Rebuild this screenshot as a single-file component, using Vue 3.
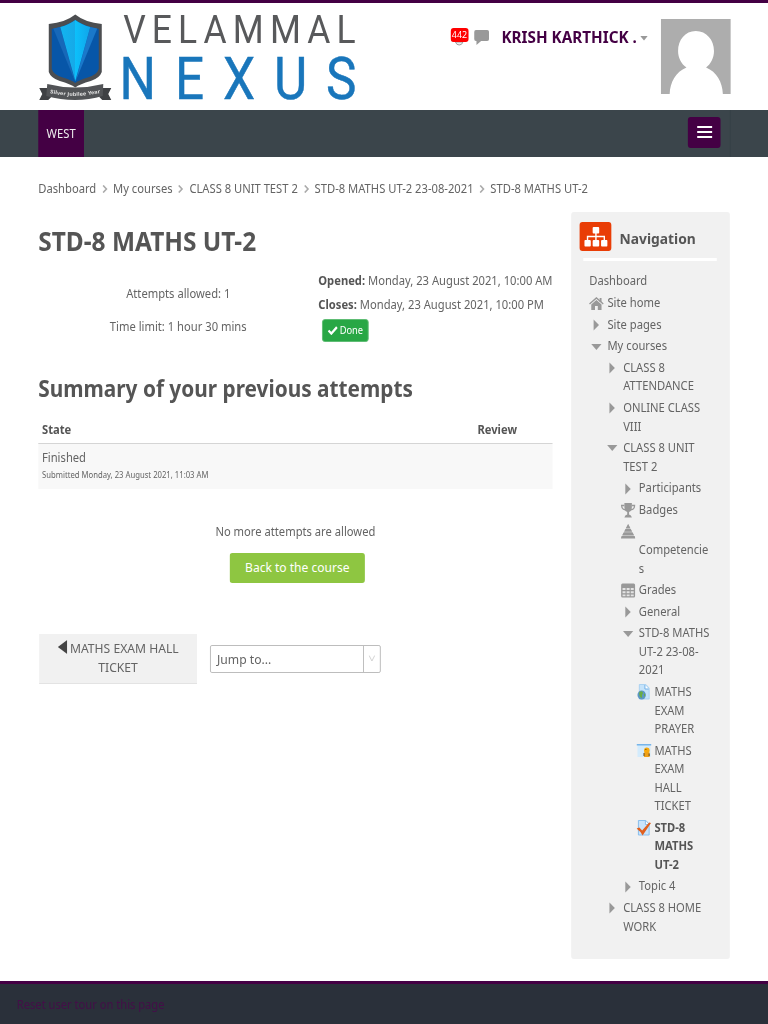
<script setup>
const crumbs = ['Dashboard', 'My courses', 'CLASS 8 UNIT TEST 2', 'STD-8 MATHS UT-2 23-08-2021', 'STD-8 MATHS UT-2']

const tree = [
  { level: 0, icon: '', lines: ['Dashboard'] },
  { level: 1, icon: 'home', lines: ['Site home'] },
  { level: 1, icon: 'right', lines: ['Site pages'] },
  { level: 1, icon: 'down', lines: ['My courses'] },
  { level: 2, icon: 'right', lines: ['CLASS 8', 'ATTENDANCE'] },
  { level: 2, icon: 'right', lines: ['ONLINE CLASS', 'VIII'] },
  { level: 2, icon: 'down', lines: ['CLASS 8 UNIT', 'TEST 2'] },
  { level: 3, icon: 'right', lines: ['Participants'] },
  { level: 3, icon: 'trophy', lines: ['Badges'] },
  { level: 3, icon: 'pyramid', lines: ['', 'Competencie', 's'] },
  { level: 3, icon: 'table', lines: ['Grades'] },
  { level: 3, icon: 'right', lines: ['General'] },
  { level: 3, icon: 'down', lines: ['STD-8 MATHS', 'UT-2 23-08-', '2021'] },
  { level: 4, icon: 'url', lines: ['MATHS', 'EXAM', 'PRAYER'] },
  { level: 4, icon: 'cert', lines: ['MATHS', 'EXAM', 'HALL', 'TICKET'] },
  { level: 4, icon: 'quiz', lines: ['STD-8', 'MATHS', 'UT-2'], bold: true },
  { level: 3, icon: 'right', lines: ['Topic 4'] },
  { level: 2, icon: 'right', lines: ['CLASS 8 HOME', 'WORK'] },
]
</script>

<template>
  <div class="viewport">
    <div class="page">
      <header class="head">
        <svg class="logo" width="346" height="94" viewBox="0 0 346 94">
          <defs>
            <linearGradient id="beam" x1="0" x2="1">
              <stop offset="0" stop-color="#12b4f0" />
              <stop offset=".5" stop-color="#16a9e8" />
              <stop offset=".5" stop-color="#0cc0fb" />
              <stop offset="1" stop-color="#11a5ea" />
            </linearGradient>
          </defs>
          <g transform="scale(1.0714 1)">
            <path d="M10.500 16 Q27 14.500 37 6.500 Q47 14.500 63.500 16 V64 Q61.500 70 52.500 73 Q41.500 76 37 79.500 Q32.500 76 21.500 73 Q12.500 70 10.500 64Z" fill="#4c4e51" />
            <path d="M13.500 21 Q27.500 18.500 37 12 Q46.500 18.500 60.500 21 V61 Q58.500 67 49.500 69.500 Q40.500 72 37 75 Q33.500 72 24.500 69.500 Q15.500 67 13.500 61Z" fill="#0756a8" />
            <path d="M15 20.500 L22 19 L37 74Z" fill="#1768b8" />
            <path d="M59 20.500 L52 19 L37 74Z" fill="#1a78ca" />
            <path d="M22 19 Q31 16.500 37 12 Q43 16.500 52 19 L37 73Z" fill="url(#beam)" />
            <path d="M1 80 L11 80 L13 89 L10 92 L1 92 L4 86Z M73 80 L64 80 L61 89 L64 92 L73 92 L70 86Z" fill="#3f4144" />
            <path d="M9 76 Q37 83 65 76 L64.500 88 Q37 96 8 88Z" fill="#525457" />
            <path id="ribbonLine" d="M11.500 85 Q37 91 63.500 84.500" fill="none" />
            <text class="jubilee"><textPath href="#ribbonLine" textLength="51">Silver Jubilee Year</textPath></text>
          </g>
          <text class="l1" x="91" y="34.700" textLength="249">VELAMMAL</text>
          <text class="l2" x="0" y="0" textLength="273" transform="translate(87 91.300) scale(.93 1)">NEXUS</text>
        </svg>
        <div class="user">
          <div class="bell">
            <svg width="20" height="16" viewBox="0 0 20 16"><path d="M2 10 Q5 9 5 5 H15 Q15 9 18 10 V11 H2Z M6 12 H14 Q13 15 10 15 Q7 15 6 12Z" fill="#eee" stroke="#999" /></svg>
            <span class="badge">442</span>
          </div>
          <svg class="chat" width="16" height="16" viewBox="0 0 16 16"><path d="M2 0 H14 Q16 0 16 2 V9 Q16 11 14 11 H7.500 L2.500 15 V11 H2 Q0 11 0 9 V2 Q0 0 2 0Z" fill="#999" /></svg>
          <span class="name">KRISH KARTHICK .</span>
          <svg class="caret" width="8" height="5" viewBox="0 0 8 5"><path d="M0 0 H8 L4 4.500Z" fill="#999" /></svg>
        </div>
        <svg class="avatar" width="75" height="75" viewBox="0 0 75 75">
          <rect width="75" height="75" fill="#adadad" />
          <path d="M37.500 12 C49 12 57 21 57 32 C57 39 53.500 45 48.500 48.500 C60 53 66 63 66.500 75 H9.500 C10 63 16 53 27.500 48.500 C22 45 18.500 39 18.500 32 C18.500 21 26 12 37.500 12Z" fill="#fff" />
        </svg>
      </header>

      <nav class="bar">
        <span class="west">WEST</span>
        <div class="burgerbox"><span class="burger"><i></i><i></i><i></i></span></div>
      </nav>

      <div class="crumbs">
        <template v-for="(c, i) in crumbs" :key="i">
          <svg v-if="i" width="7" height="8" viewBox="0 0 7 8"><path d="M1.500 .5 L5 4 L1.500 7.500" fill="none" stroke="#aaa" stroke-width="1.700" /></svg>
          <span>{{ c }}</span>
        </template>
      </div>

      <div class="cols">
        <main class="main">
          <h2>STD-8 MATHS UT-2</h2>
          <div class="info">
            <div class="limits"><p>Attempts allowed: 1</p><p>Time limit: 1 hour 30 mins</p></div>
            <div class="dates">
              <p><b>Opened:</b> Monday, 23 August 2021, 10:00 AM</p>
              <p><b>Closes:</b> Monday, 23 August 2021, 10:00 PM</p>
              <span class="done">
                <svg width="11" height="9" viewBox="0 0 11 9"><path d="M1 4.500 L4 7.500 L10 1.200" fill="none" stroke="#fff" stroke-width="2.400" /></svg>Done
              </span>
            </div>
          </div>
          <h3>Summary of your previous attempts</h3>
          <div class="thead"><span>State</span><span>Review</span></div>
          <div class="trow"><div>Finished</div><small>Submitted Monday, 23 August 2021, 11:03 AM</small></div>
          <p class="nomore">No more attempts are allowed</p>
          <span class="back">Back to the course</span>
          <div class="jump">
            <div class="prev"><div><svg width="10" height="14" viewBox="0 0 10 14"><path d="M10 0 V14 L0 7Z" fill="#444" /></svg> MATHS EXAM HALL</div><div>TICKET</div></div>
            <div class="select"><span>Jump to...</span><i><svg width="7" height="7" viewBox="0 0 7 7"><path d="M.5 .5 L3.500 6 L6.500 .5" fill="none" stroke="#ccc" stroke-width=".9" /></svg></i></div>
          </div>
        </main>

        <aside class="side">
          <div class="title">
            <span class="sq">
              <svg width="25" height="20" viewBox="0 0 25 20"><g fill="#fff"><rect x="9" y="0" width="7" height="6.500" rx="1" /><rect x="0" y="13" width="7" height="6.500" rx="1" /><rect x="9" y="13" width="7" height="6.500" rx="1" /><rect x="18" y="13" width="7" height="6.500" rx="1" /></g><path d="M12.500 6 V13 M3.500 13 V9.500 H21.500 V13" fill="none" stroke="#fff" stroke-width="1.500" /></svg>
            </span>
            <b>Navigation</b>
          </div>
          <ul>
            <li v-for="(t, i) in tree" :key="i" :class="['lv' + t.level, { bold: t.bold }]">
              <span class="ic">
                <svg v-if="t.icon === 'right'" width="16" height="12" viewBox="0 0 16 12"><path d="M5 .5 L10.800 6 L5 11.500Z" fill="#999" /></svg>
                <svg v-else-if="t.icon === 'down'" width="16" height="12" viewBox="0 0 16 12"><path d="M2.500 3 H13.500 L8 9Z" fill="#999" /></svg>
                <svg v-else-if="t.icon === 'home'" width="16" height="13" viewBox="0 0 16 13"><path d="M.6 7 L8 1 L15.400 7" fill="none" stroke="#999" stroke-width="1.600" /><path d="M11.500 1 H13.500 V5 H11.500Z M2.500 7.500 L8 3 L13.500 7.500 V13 H9.500 V9 H6.500 V13 H2.500Z" fill="#999" /></svg>
                <svg v-else-if="t.icon === 'trophy'" width="16" height="15" viewBox="0 0 16 15"><path d="M4 0 H12 V4 Q12 8 9 9 V11.500 Q11.500 12 12 14.500 H4 Q4.500 12 7 11.500 V9 Q4 8 4 4Z" fill="#999" /><path d="M4 2.500 H1 Q1 6.500 5.500 7 M12 2.500 H15 Q15 6.500 10.500 7" fill="none" stroke="#999" stroke-width="1.400" /></svg>
                <svg v-else-if="t.icon === 'pyramid'" width="16" height="15" viewBox="0 0 16 15"><path d="M8 0 L10.300 4 H5.700Z M5.200 5 H10.800 L12.200 7.500 H3.800Z M3.200 8.500 H12.800 L14.200 11 H1.800Z M1 12 H15 L15.700 14.500 H.3Z" fill="#999" /><path d="M8 0 L15.500 14 H.5Z" fill="#999" opacity=".55" /></svg>
                <svg v-else-if="t.icon === 'table'" width="16" height="15" viewBox="0 0 16 15"><rect x=".5" y=".5" width="15" height="14" rx="1.500" fill="#999" /><path d="M2 5 H5.200 V7 H2Z M6.400 5 H9.600 V7 H6.400Z M10.800 5 H14 V7 H10.800Z M2 8.200 H5.200 V10.200 H2Z M6.400 8.200 H9.600 V10.200 H6.400Z M10.800 8.200 H14 V10.200 H10.800Z M2 11.400 H5.200 V13.200 H2Z M6.400 11.400 H9.600 V13.200 H6.400Z M10.800 11.400 H14 V13.200 H10.800Z" fill="#e4e4e4" /></svg>
                <svg v-else-if="t.icon === 'url'" width="16" height="16" viewBox="0 0 16 16"><path d="M3 .5 H10 L13.500 4 V15 H3Z" fill="#c5e3fa" stroke="#a9d0f1" /><path d="M9 1 V5 H13" fill="#fff" stroke="#6faee6" /><circle cx="5.500" cy="11" r="4.500" fill="#5b97c6" /><path d="M3 8 Q6 6 7 9 Q5 11 6 14 Q2 13 3 8Z M8 9 L9.500 11 L8 13Z" fill="#6aad45" /></svg>
                <svg v-else-if="t.icon === 'cert'" width="16" height="14" viewBox="0 0 16 14"><rect x="1" y="1" width="14" height="12" fill="#d3ebfc" /><path d="M0 .8 H16" stroke="#77b5ea" stroke-width="1.500" /><circle cx="11" cy="6.500" r="3" fill="#f8a90d" /><path d="M8 8.500 H14 V13 H8Z" fill="#efa017" /><path d="M8 9 V12 M13.500 9.500 V12 M10 5 V6" stroke="#5d4420" /></svg>
                <svg v-else-if="t.icon === 'quiz'" width="16" height="16" viewBox="0 0 16 16"><path d="M2 .5 H10 L13.500 4 V15 H2Z" fill="#c9e4fb" stroke="#86bdec" /><path d="M9.500 1 V4.500 H13" fill="#fff" stroke="#86bdec" /><path d="M0 8.500 L3 7.500 L6 10.500 L13.500 2.500 L15.500 3 L6.500 15.500 Q4 11 0 8.500Z" fill="#e0601f" /></svg>
              </span>
              <span class="txt"><span v-for="(l, j) in t.lines" :key="j" class="ln">{{ l }}</span></span>
            </li>
          </ul>
        </aside>
      </div>

      <footer class="foot"><span>Reset user tour on this page</span></footer>
    </div>
  </div>
</template>

<style>
body { margin: 0; background: #fff; }
</style>

<style scoped>
* { box-sizing: border-box; }
.viewport { width: 768px; height: 1024px; overflow: hidden; }
/* The page is laid out wide and condensed horizontally. */
.page {
  width: 822.86px; height: 1024px; transform: scaleX(.93333); transform-origin: 0 0;
  display: flex; flex-direction: column;
  font: 12px/18.500px "Noto Sans", "Open Sans", sans-serif; color: #646464;
}
p, h2, h3, ul { margin: 0; padding: 0; }
svg { display: block; flex: none; }
.head { height: 110px; border-top: 3px solid #440044; padding: 0 40px 0 41px; display: flex; flex: none; }
.logo { margin-top: 5px; overflow: visible; }
.l1 { font: 38px Roboto, sans-serif; fill: #58595b; }
.l2 { font: 59px Roboto, sans-serif; fill: #1976bb; stroke: #1976bb; stroke-width: .5px; }
.jubilee { font: bold 5px "DejaVu Sans", sans-serif; fill: #ddd; }
.user { margin-left: auto; margin-right: 13.500px; display: flex; align-items: center; height: 28px; margin-top: 20px; }
.bell { position: relative; width: 20px; height: 16px; margin-right: 6.500px; top: 1px; }
.badge { position: absolute; left: 1px; top: -2px; width: 19px; height: 14px; border-radius: 3px; background: #f00; color: #fff; font-size: 9.500px; line-height: 14px; text-align: center; }
.chat { margin-top: 2px; }
.name { font-size: 16.350px; line-height: 20px; font-weight: 700; color: #440044; margin: 0 4px 0 13px; white-space: nowrap; }
.caret { margin-top: 3px; }
.avatar { margin-top: 16px; }
.bar { height: 47px; flex: none; background: #3b454b; padding: 0 40px 0 41px; display: flex; justify-content: space-between; }
.west { width: 49px; background: #440044; color: #eee; text-align: center; line-height: 47px; }
.burgerbox { border-right: 1px solid #364046; padding: 6.500px 9.500px 0 0; }
.burger { display: flex; flex-direction: column; justify-content: center; align-items: center; gap: 3px; width: 35px; height: 31px; border-radius: 3px; background: #440044; }
.burger i { width: 16px; height: 2px; background: #fff; }
.crumbs { margin: 22px 0 0 41px; height: 20px; display: flex; align-items: center; flex: none; white-space: nowrap; }
.crumbs svg { margin: 0 5.500px; }
.cols { margin: 13px 40.500px 0 41px; height: 747px; display: flex; justify-content: space-between; flex: none; }
.main { width: 551px; }
h2 { font-size: 26.200px; line-height: 36px; margin-top: 11px; color: #555; }
.info { display: flex; margin-top: 10px; height: 78px; white-space: nowrap; }
.limits { width: 301.500px; text-align: center; padding-top: 16px; }
.limits p + p { margin-top: 14px; }
.dates { padding-top: 3px; }
.dates p + p { margin-top: 5.500px; }
.dates b { color: #555; }
.done { display: flex; align-items: center; justify-content: center; gap: 2px; width: 50px; height: 23px; margin: 4.500px 0 0 4px; background: #28a745; border: 1px solid #5fbd74; border-radius: 3px; color: #fff; font-size: 10px; }
h3 { font-size: 22.300px; line-height: 32px; margin-top: 26px; color: #555; white-space: nowrap; }
.thead { display: flex; margin-top: 14px; height: 25px; border-bottom: 1px solid #d5d5d5; padding: 2px 4px 0; font-weight: 700; color: #555; }
.thead span:first-child { width: 466.500px; }
.trow { height: 45px; background: #f8f8f8; padding: 4.500px 4px 4px; }
.trow small { display: block; font-size: 8.250px; line-height: 15.500px; }
.nomore { text-align: center; margin-top: 33.500px; }
.back { display: block; width: 145px; height: 30px; margin: 12px auto 0; position: relative; left: 2px; background: #8ec641; color: #fff; border-radius: 3px; text-align: center; line-height: 29px; font-size: 12.900px; }
.jump { display: flex; margin: 50.500px 0 0 1px; gap: 14px; font-size: 13px; }
.prev { width: 169px; height: 50px; background: #f1f1f1; border-bottom: 1px solid #e3e3e3; text-align: center; padding-top: 5.500px; }
.prev svg { display: inline-block; vertical-align: -1px; }
.select { width: 183px; height: 28px; margin-top: 11px; border: 1px solid #bbb; border-radius: 2px; display: flex; justify-content: space-between; line-height: 26px; padding-left: 6.500px; }
.select i { width: 18px; border-left: 1px solid #bbb; display: flex; align-items: center; justify-content: center; }
.side { width: 170.500px; background: #f1f1f1; border-radius: 3px; padding: 9px 10px 9px 9.500px; }
.title { display: flex; align-items: center; height: 31px; font-size: 14.800px; color: #555; }
.title b { padding-top: 3px; }
.sq { width: 34px; height: 29px; border-radius: 3px; background: #e93d06; display: flex; align-items: center; justify-content: center; margin-right: 8.500px; }
ul { list-style: none; border-top: 3px solid #fff; margin: 6px 4px 0 4px; padding-top: 11.400px; }
li { display: flex; padding-bottom: 3.130px; margin-right: -10px; }
.ic { width: 16px; height: 18.500px; display: flex; align-items: center; flex: none; margin-right: 3.500px; }
.lv0 .ic { display: none; }
.lv0, .lv1 { padding-left: 6px; }
.lv2 { padding-left: 22.800px; }
.lv3 { padding-left: 39.600px; }
.lv4 { padding-left: 56.300px; }
.ln { display: block; height: 18.500px; white-space: nowrap; }
.bold { font-weight: 700; color: #555; }
.foot { margin-top: 22px; flex: 1; border-top: 3px solid #440044; background: #2a303a; color: #440f48; padding: 12px 18px; font-size: 11.950px; }
</style>
